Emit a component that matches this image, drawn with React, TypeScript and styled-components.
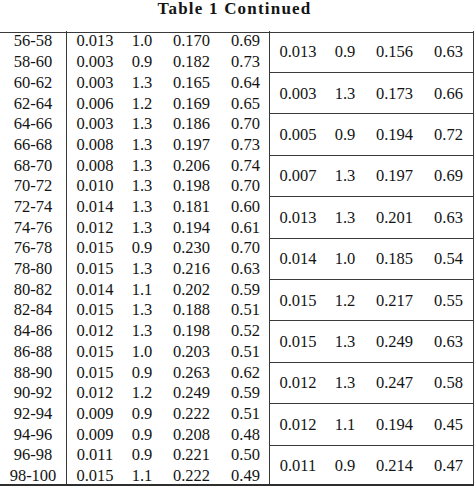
import React from "react";
import styled, { createGlobalStyle } from "styled-components";

const Global = createGlobalStyle`
  html, body { margin: 0; padding: 0; background: #ffffff; }
  body { font-family: "Liberation Serif", "Times New Roman", serif; color: #141414; }
`;

const Page = styled.div`
  width: 474px;
  display: flex;
  flex-direction: column;
  font-family: "Liberation Serif", "Times New Roman", serif;
`;

const Title = styled.h1`
  margin: 0;
  padding-right: 5px;
  font-size: 17px;
  line-height: 17px;
  font-weight: 700;
  letter-spacing: 1.2px;
  text-align: center;
`;

const Table = styled.div`
  position: relative;
  margin-top: 13.6px;
  display: flex;
  flex-direction: column;

  &::before {
    content: "";
    position: absolute;
    left: 0;
    right: 0;
    top: 1.4px;
    height: 1px;
    background: #3a3a3a;
  }

  &::after {
    content: "";
    position: absolute;
    left: 0;
    right: 0;
    bottom: 0;
    height: 2px;
    background: #2e2e2e;
  }
`;

const Pair = styled.div`
  display: grid;
  grid-template-columns: 67px 203px 204px;
  height: 41.4px;
  font-size: 16.5px;
`;

const LabelCell = styled.div`
  border-right: 1px solid #3a3a3a;
  display: grid;
  grid-template-rows: 1fr 1fr;
  text-align: center;
  line-height: 19px;
  align-items: center;
`;

const ValueGrid = styled.div<{ $single?: boolean; $divided?: boolean }>`
  border-right: 1px solid #3a3a3a;
  border-top: ${(p) => (p.$divided ? "1px solid #3a3a3a" : "0")};
  display: grid;
  grid-template-columns: 56px 38px 61px 47px;
  grid-template-rows: ${(p) => (p.$single ? "1fr" : "1fr 1fr")};
  align-items: center;
  justify-items: center;
  line-height: 19px;
`;

const Cell = styled.span`
  white-space: nowrap;
`;

type Row = [string, string, string, string, string];
type PairData = { rows: [Row, Row]; right: [string, string, string, string] };

const data: PairData[] = [
  { rows: [["56-58", "0.013", "1.0", "0.170", "0.69"], ["58-60", "0.003", "0.9", "0.182", "0.73"]], right: ["0.013", "0.9", "0.156", "0.63"] },
  { rows: [["60-62", "0.003", "1.3", "0.165", "0.64"], ["62-64", "0.006", "1.2", "0.169", "0.65"]], right: ["0.003", "1.3", "0.173", "0.66"] },
  { rows: [["64-66", "0.003", "1.3", "0.186", "0.70"], ["66-68", "0.008", "1.3", "0.197", "0.73"]], right: ["0.005", "0.9", "0.194", "0.72"] },
  { rows: [["68-70", "0.008", "1.3", "0.206", "0.74"], ["70-72", "0.010", "1.3", "0.198", "0.70"]], right: ["0.007", "1.3", "0.197", "0.69"] },
  { rows: [["72-74", "0.014", "1.3", "0.181", "0.60"], ["74-76", "0.012", "1.3", "0.194", "0.61"]], right: ["0.013", "1.3", "0.201", "0.63"] },
  { rows: [["76-78", "0.015", "0.9", "0.230", "0.70"], ["78-80", "0.015", "1.3", "0.216", "0.63"]], right: ["0.014", "1.0", "0.185", "0.54"] },
  { rows: [["80-82", "0.014", "1.1", "0.202", "0.59"], ["82-84", "0.015", "1.3", "0.188", "0.51"]], right: ["0.015", "1.2", "0.217", "0.55"] },
  { rows: [["84-86", "0.012", "1.3", "0.198", "0.52"], ["86-88", "0.015", "1.0", "0.203", "0.51"]], right: ["0.015", "1.3", "0.249", "0.63"] },
  { rows: [["88-90", "0.015", "0.9", "0.263", "0.62"], ["90-92", "0.012", "1.2", "0.249", "0.59"]], right: ["0.012", "1.3", "0.247", "0.58"] },
  { rows: [["92-94", "0.009", "0.9", "0.222", "0.51"], ["94-96", "0.009", "0.9", "0.208", "0.48"]], right: ["0.012", "1.1", "0.194", "0.45"] },
  { rows: [["96-98", "0.011", "0.9", "0.221", "0.50"], ["98-100", "0.015", "1.1", "0.222", "0.49"]], right: ["0.011", "0.9", "0.214", "0.47"] },
];

export default function App() {
  return (
    <Page>
      <Global />
      <Title>Table 1 Continued</Title>
      <Table>
        {data.map((p, i) => (
          <Pair key={i}>
            <LabelCell>
              <Cell>{p.rows[0][0]}</Cell>
              <Cell>{p.rows[1][0]}</Cell>
            </LabelCell>
            <ValueGrid>
              {p.rows.map((r) => r.slice(1).map((v, j) => <Cell key={r[0] + j}>{v}</Cell>))}
            </ValueGrid>
            <ValueGrid $single $divided={i > 0}>
              {p.right.map((v, j) => (
                <Cell key={j}>{v}</Cell>
              ))}
            </ValueGrid>
          </Pair>
        ))}
      </Table>
    </Page>
  );
}
